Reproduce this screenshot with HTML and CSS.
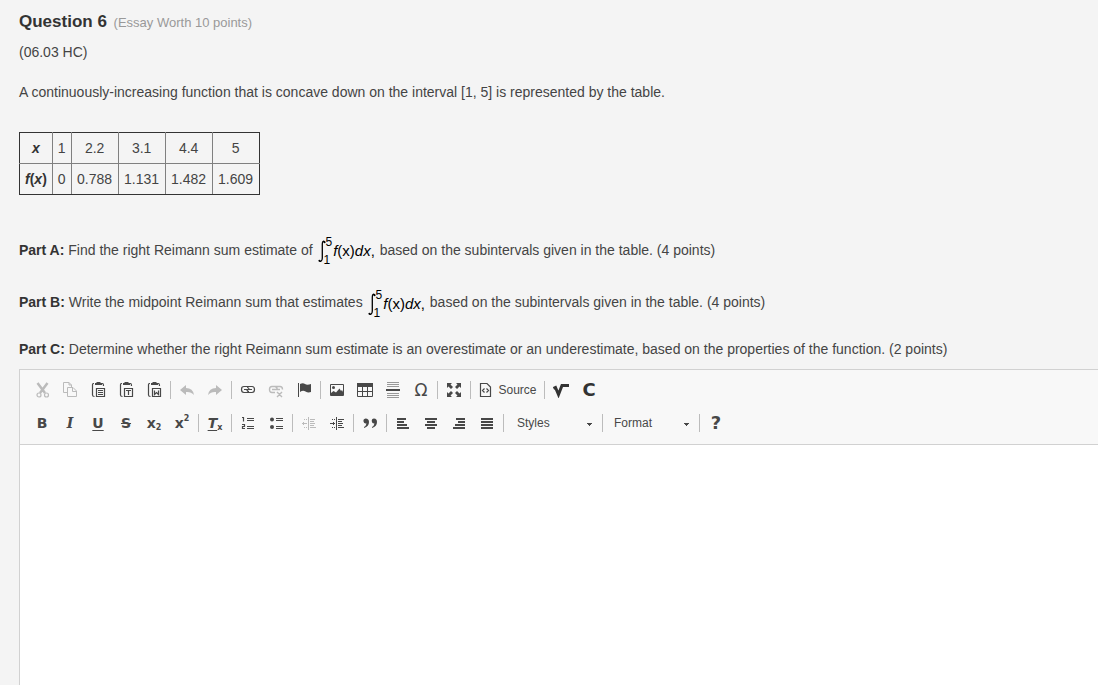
FILE: index.html
```
<!DOCTYPE html>
<html lang="en">
<head>
    <meta charset="UTF-8">
    <meta name="viewport" content="width=device-width, initial-scale=1.0">
    <title>Question 6</title>
    <link rel="stylesheet" href="styles.css">
</head>
<body>

<div class="question">
    <h3>Question 6 <span class="worth">(Essay Worth 10 points)</span></h3>
    <p class="code">(06.03 HC)</p>
    <p class="intro">A continuously-increasing function that is concave down on the interval [1, 5] is represented by the table.</p>

    <table class="values">
        <tr>
            <th scope="row"><i>x</i></th>
            <td>1</td><td class="wide">2.2</td><td class="wide">3.1</td><td class="wide">4.4</td><td class="wide">5</td>
        </tr>
        <tr>
            <th scope="row"><i>f</i>(<i>x</i>)</th>
            <td>0</td><td>0.788</td><td>1.131</td><td>1.482</td><td>1.609</td>
        </tr>
    </table>

    <p class="part math-line"><b>Part A:</b> Find the right Reimann sum estimate of
        <span class="math"><svg width="8" height="24" viewBox="0 0 8 24"><path d="M7 3.5C6 1.5 4.3 2 4.3 5V19C4.3 22.500 2 23 1 21.500" fill="none" stroke="#000" stroke-width="1.300"/><circle cx="6.500" cy="3.300" r="1"/><circle cx="1.500" cy="21.700" r="1"/></svg><span class="limits"><span>5</span><span class="lower">1</span></span><span><i>f</i>(x)<i>dx</i>,</span></span>
        based on the subintervals given in the table. (4 points)</p>
    <p class="part math-line"><b>Part B:</b> Write the midpoint Reimann sum that estimates
        <span class="math"><svg width="8" height="24" viewBox="0 0 8 24"><path d="M7 3.5C6 1.5 4.3 2 4.3 5V19C4.3 22.500 2 23 1 21.500" fill="none" stroke="#000" stroke-width="1.300"/><circle cx="6.500" cy="3.300" r="1"/><circle cx="1.500" cy="21.700" r="1"/></svg><span class="limits"><span>5</span><span class="lower">1</span></span><span><i>f</i>(x)<i>dx</i>,</span></span>
        based on the subintervals given in the table. (4 points)</p>
    <p class="part"><b>Part C:</b> Determine whether the right Reimann sum estimate is an overestimate or an underestimate, based on the properties of the function. (2 points)</p>
</div>

<div class="editor">
    <div class="toolbar">
        <div class="row">
            <button class="disabled" aria-label="Cut" disabled><svg viewBox="0 0 16 16"><path d="M3.500 1 11 11M13.500 1 6 11" fill="none" stroke="currentColor" stroke-width="2.500"/><circle cx="5" cy="13" r="2" fill="none" stroke="currentColor" stroke-width="1.200"/><circle cx="12.500" cy="13" r="2" fill="none" stroke="currentColor" stroke-width="1.200"/></svg></button>
            <button class="disabled" aria-label="Copy" disabled><svg viewBox="0 0 16 16"><path d="M5 10.500H1.500V.5H7L9.500 3V5M7 .5V3H9.500M5.500 5.500H11L14.500 9V14.500H5.500ZM10.500 5.500V9.500H14.500" fill="none" stroke="currentColor"/></svg></button>
            <button aria-label="Paste"><svg viewBox="0 0 16 16"><path d="M4 1.500H3.500Q2.500 1.500 2.500 3V13Q2.500 14.500 4.500 14.500M12 1.500H12.500Q13.500 1.500 13.500 4M6.500 6.500H14.500V14.500H6.500ZM8 8.500H13M8 10.500H13M8 12.500H13" fill="none" stroke="currentColor" stroke-width="1.200"/><path d="M5 3V1H6.500V0H10.500V1H12V3Z"/></svg></button>
            <button aria-label="Paste as plain text"><svg viewBox="0 0 16 16"><path d="M4 1.500H3.500Q2.500 1.500 2.500 3V13Q2.500 14.500 4.500 14.500M12 1.500H12.500Q13.500 1.500 13.500 4M6.500 6.500H14.500V14.500H6.500ZM8 8.500H13M10.500 8.500V13" fill="none" stroke="currentColor" stroke-width="1.200"/><path d="M5 3V1H6.500V0H10.500V1H12V3Z"/></svg></button>
            <button aria-label="Paste from Word"><svg viewBox="0 0 16 16"><path d="M4 1.500H3.500Q2.500 1.500 2.500 3V13Q2.500 14.500 4.500 14.500M12 1.500H12.500Q13.500 1.500 13.500 4M6.500 6.500H14.500V14.500H6.500ZM8.500 8.500V12.500L10.500 10.500 12.500 12.500V8.500" fill="none" stroke="currentColor" stroke-width="1.200"/><path d="M5 3V1H6.500V0H10.500V1H12V3Z"/></svg></button>
            <span class="sep"></span>
            <button class="disabled" aria-label="Undo" disabled><svg viewBox="0 0 16 16"><path d="M1 8 7 3V6Q14 6 15 13 12 9.500 7 10V13Z"/></svg></button>
            <button class="disabled" aria-label="Redo" disabled><svg viewBox="0 0 16 16"><path d="M15 8 9 3V6Q2 6 1 13 4 9.500 9 10V13Z"/></svg></button>
            <span class="sep"></span>
            <button aria-label="Link"><svg viewBox="0 0 16 16"><path d="M8 4.500H4Q1.500 4.500 1.500 7.500T4 10.500H8M8 4.500H12Q14.500 4.500 14.500 7.500T12 10.500H8M4 7.500H12M7 5.500Q9 5.500 9 7.500M7 7.500Q7 9.500 9 9.500" fill="none" stroke="currentColor" stroke-width="1.200"/></svg></button>
            <button class="disabled" aria-label="Unlink" disabled><svg viewBox="0 0 16 16"><path d="M7 10.500H4Q1.500 10.500 1.500 7.500T4 4.500H12Q14.500 4.500 14.500 7.500M4 7.500H12M7 4.500Q9.500 5 9 7.500M9 10 14 15M14 10 9 15" fill="none" stroke="currentColor" stroke-width="1.400"/></svg></button>
            <button aria-label="Anchor"><svg viewBox="0 0 16 16"><path d="M2 1H3V15H2ZM4 2Q7 .5 9 2T15 2V10Q12 11 9.500 9.500T4 10Z"/></svg></button>
            <span class="sep"></span>
            <button aria-label="Image"><svg viewBox="0 0 16 16"><path d="M1.500 2.500H14.500V13.500H1.500Z" fill="none" stroke="currentColor"/><circle cx="4.500" cy="5.500" r="1.500"/><path d="M2 13V11L4.500 9 7 10.500 10.500 6.500 12 9 13 8 14 10V13Z"/></svg></button>
            <button aria-label="Table"><svg viewBox="0 0 16 16"><path d="M.5 1.500H15.500V14.500H.5ZM.5 9.500H15.500M5.500 4V14M10.500 4V14" fill="none" stroke="currentColor"/><path d="M0 1H16V5H0Z"/></svg></button>
            <button aria-label="Horizontal line"><svg viewBox="0 0 16 16"><path d="M2 .5H14M2 2.500H14M2 4.500H14M2 11.500H14M2 13.500H14M2 15.500H14" stroke="#999"/><path d="M1 7H15V9H1Z"/></svg></button>
            <button class="glyph omega" aria-label="Special character">Ω</button>
            <span class="sep"></span>
            <button aria-label="Maximize"><svg viewBox="0 0 16 16"><path d="M1 1H6L4.500 2.500 7 5 5 7 2.500 4.500 1 6ZM15 1V6L13.500 4.500 11 7 9 5 11.500 2.500 10 1ZM1 15V10L2.500 11.500 5 9 7 11 4.500 13.500 6 15ZM15 15H10L11.500 13.500 9 11 11 9 13.500 11.500 15 10Z"/></svg></button>
            <span class="sep"></span>
            <button class="source"><svg viewBox="0 0 16 16"><path d="M2.500 1.500H9L12.500 5V14.500H2.500ZM6.500 6.500 4.500 8.500 6.500 10.500M8.500 6.500 10.500 8.500 8.500 10.500" fill="none" stroke="currentColor" stroke-width="1.200"/></svg>Source</button>
            <span class="sep"></span>
            <button class="dark" aria-label="Math formula"><svg viewBox="0 0 16 16"><path d="M.5 6.500 2.500 5.500 5.500 12.500 9 3.500H16" fill="none" stroke="currentColor" stroke-width="3"/></svg></button>
            <button class="glyph chem dark" aria-label="Chemistry formula">C</button>
        </div>
        <div class="row">
            <button class="glyph" aria-label="Bold">B</button>
            <button class="glyph italic" aria-label="Italic">I</button>
            <button class="glyph underline" aria-label="Underline">U</button>
            <button class="glyph strike" aria-label="Strikethrough">S</button>
            <button class="glyph" aria-label="Subscript">x<sub>2</sub></button>
            <button class="glyph" aria-label="Superscript">x<sup>2</sup></button>
            <span class="sep"></span>
            <button class="glyph" aria-label="Remove format"><i class="underline">T</i><sub>x</sub></button>
            <span class="sep"></span>
            <button aria-label="Numbered list"><svg viewBox="0 0 16 16"><path d="M7 3.500H14M7 5.500H14M7 11.500H14M7 13.500H14M2 2.500H3.500V6.500M2 9.500H4.500V11.500H2.500V13.500H5" fill="none" stroke="currentColor" stroke-width="1.200"/></svg></button>
            <button aria-label="Bulleted list"><svg viewBox="0 0 16 16"><circle cx="4" cy="4.500" r="2"/><circle cx="4" cy="12" r="2"/><path d="M8 3.500H15M8 5.500H15M8 11.500H15M8 13.500H15" stroke="currentColor" stroke-width="1.200"/></svg></button>
            <span class="sep"></span>
            <button class="disabled" aria-label="Decrease indent" disabled><svg viewBox="0 0 16 16"><path d="M1 8.500H6M3 7 1.500 8.500 3 10M7.500 2V15M9 4.500H14M9 6.500H13M9 8.500H14M9 10.500H13M9 12.500H15M3 4.500H4M5 4.500H6M3 12.500H4M5 12.500H6" fill="none" stroke="currentColor"/></svg></button>
            <button aria-label="Increase indent"><svg viewBox="0 0 16 16"><path d="M1 8.500H6M4 7 5.500 8.500 4 10M7.500 2V15M9 4.500H15M9 6.500H13M9 8.500H14M9 10.500H13M9 12.500H15M3 4.500H4M5 4.500H6M3 12.500H4M5 12.500H6" fill="none" stroke="currentColor"/></svg></button>
            <span class="sep"></span>
            <button aria-label="Block quote"><svg viewBox="0 0 16 16"><path d="M3.500 3.500A2.500 2.500 0 1 0 4.500 8.500Q4 11 2 12V13Q7 11.500 7 7 7 3.500 3.500 3.500ZM12 3.500A2.500 2.500 0 1 0 12.500 8.500Q12 11 10 12V13Q15 11.500 15 7 15 3.500 12 3.500Z"/></svg></button>
            <span class="sep"></span>
            <button aria-label="Align left"><svg viewBox="0 0 16 16"><path d="M2 3H11V5H2ZM2 6H9V8H2ZM2 9H12V11H2ZM2 12H14V14H2Z"/></svg></button>
            <button aria-label="Center"><svg viewBox="0 0 16 16"><path d="M2 3H14V5H2ZM4 6H12V8H4ZM2 9H14V11H2ZM4 12H12V14H4Z"/></svg></button>
            <button aria-label="Align right"><svg viewBox="0 0 16 16"><path d="M5 3H14V5H5ZM7 6H14V8H7ZM4 9H14V11H4ZM2 12H14V14H2Z"/></svg></button>
            <button aria-label="Justify"><svg viewBox="0 0 16 16"><path d="M2 3H14V5H2ZM2 6H14V8H2ZM2 9H14V11H2ZM2 12H14V14H2Z"/></svg></button>
            <span class="sep"></span>
            <select class="combo styles" aria-label="Styles"><option>Styles</option></select>
            <span class="sep"></span>
            <select class="combo" aria-label="Format"><option>Format</option></select>
            <span class="sep"></span>
            <button class="glyph help" aria-label="About">?</button>
        </div>
    </div>
    <textarea class="answer" aria-label="Answer"></textarea>
</div>

</body>
</html>
```
FILE: styles.css
```
* {
    box-sizing: border-box;
}
body {
    display: flex;
    flex-direction: column;
    min-height: 100vh;
    margin: 0;
    padding: 12px 0 0 19px;
    font-family: "Liberation Sans", Arial, sans-serif;
    font-size: 14px;
    line-height: 20px;
    color: #444;
    background-color: #f4f4f4;
}
h3 {
    margin: 0;
    font-size: 17px;
    line-height: 20px;
    color: #333;
}
.worth {
    margin-left: 2px;
    font-size: 13px;
    font-weight: normal;
    color: #999;
}
p {
    margin: 0;
}
.code {
    margin-top: 9px;
}
.intro {
    margin-top: 20px;
}
.values {
    margin: 30px 0 39px;
    border-collapse: collapse;
    border: 1px solid #333;
}
.values th, .values td {
    padding: 5px;
    border: 1px solid #808080;
    text-align: center;
}
.values .wide {
    width: 47px;
}
.values tr:first-child > * {
    border-top-color: #333;
}
.values tr:last-child > * {
    border-bottom-color: #333;
}
.values th {
    border-left-color: #333;
    color: #333;
}
.values td:last-child {
    border-right-color: #333;
}
.part b {
    color: #333;
}
.math-line {
    line-height: 32px;
    margin-bottom: 20px;
}
.math {
    display: inline-flex;
    align-items: center;
    height: 30px;
    margin: 0 1px;
    font-size: 15px;
    line-height: 16px;
    vertical-align: middle;
    color: #000;
}
.limits {
    display: flex;
    flex-direction: column;
    justify-content: space-between;
    height: 28px;
    margin-right: 1px;
    font-size: 12px;
    line-height: 10px;
}
.limits .lower {
    margin-left: -2px;
}

/* editor */
.editor {
    display: flex;
    flex-direction: column;
    flex: 1;
    margin-top: 10px;
    border: 1px solid #d1d1d1;
    border-width: 1px 0 0 1px;
}
.toolbar {
    display: flex;
    flex-direction: column;
    gap: 7px;
    padding: 7px 8px 8px;
    background-color: #f8f8f8;
    border-bottom: 1px solid #d1d1d1;
}
.row {
    display: flex;
    align-items: center;
    height: 26px;
}
.row button {
    display: flex;
    align-items: center;
    justify-content: center;
    width: 28px;
    height: 26px;
    padding: 0;
    border: none;
    background: none;
    color: #484848;
    font-family: inherit;
    cursor: pointer;
}
.row svg {
    width: 16px;
    height: 16px;
    flex: none;
    fill: currentColor;
}
.row .disabled {
    color: #bbb;
    cursor: default;
}
.row .dark {
    color: #333;
}
.row .source {
    width: 69px;
    gap: 4px;
    font-size: 12px;
}
.sep {
    width: 1px;
    height: 18px;
    margin: 0 2px;
    background-color: #bcbcbc;
}
.row .glyph {
    font-family: "DejaVu Sans", sans-serif;
    font-size: 14px;
    font-weight: bold;
    line-height: 16px;
}
.row .italic {
    font-family: "DejaVu Serif", serif;
    font-style: italic;
}
.underline {
    text-decoration: underline;
    text-underline-offset: 2px;
}
.strike {
    text-decoration: line-through;
}
.glyph sub, .glyph sup {
    font-size: 8px;
    line-height: 8px;
}
.glyph sub {
    align-self: flex-end;
    margin-bottom: 4px;
}
.glyph sup {
    align-self: flex-start;
    margin-top: 5px;
}
.row .omega {
    font-size: 17px;
    font-weight: normal;
}
.row .chem, .row .help {
    font-size: 18px;
}
.combo {
    width: 92px;
    height: 26px;
    padding: 0 20px 0 9px;
    border: none;
    appearance: none;
    background: linear-gradient(#484848, #484848) right 8px top 13px / 5px 1px no-repeat,
        linear-gradient(#484848, #484848) right 9px top 14px / 3px 1px no-repeat,
        linear-gradient(#484848, #484848) right 10px top 15px / 1px 1px no-repeat;
    color: #484848;
    font-family: inherit;
    font-size: 12px;
}
.styles {
    width: 94px;
    padding-left: 11px;
}
.answer {
    display: block;
    flex: 1;
    width: 100%;
    min-height: 200px;
    padding: 20px;
    border: none;
    outline: none;
    resize: none;
    background-color: #fff;
    font: inherit;
}
```
